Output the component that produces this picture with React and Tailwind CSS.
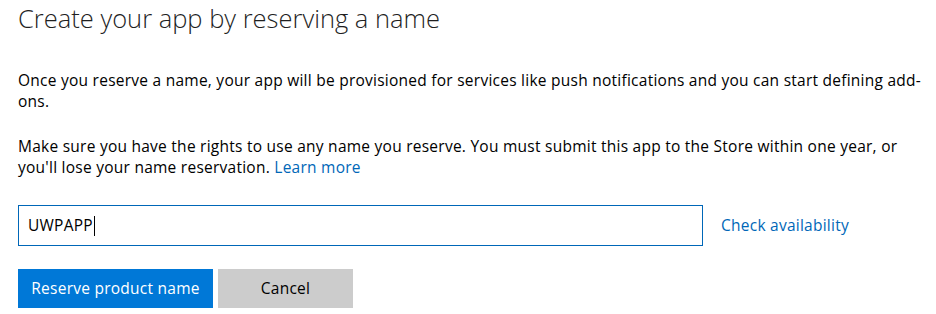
export default function App() {
  return (
    <div className="w-[936px] h-[314px] bg-white overflow-hidden text-black" style={{ fontFamily: '"Open Sans", "Noto Sans", sans-serif' }}>
      <div className="pl-[18px] pr-[14px]">
        <h1 className="pt-[1px] text-[25.5px] leading-[34px] font-light text-[#1f1f1f]">
          Create your app by reserving a name
        </h1>
        <p className="mt-[35px] text-[15.5px] leading-[21px] tracking-[0.25px]">
          Once you reserve a name, your app will be provisioned for services like push notifications and you can start defining add-ons.
        </p>
        <p className="mt-[24px] text-[15.5px] leading-[21px] tracking-[0.25px] pr-[20px]">
          Make sure you have the rights to use any name you reserve. You must submit this app to the Store within one year, or you'll lose your name reservation.{" "}
          <a href="#" className="text-[#0067b8]">Learn more</a>
        </p>
        <div className="mt-[27px] flex items-center">
          <div className="w-[685px] h-[41px] border border-[#0067b8] flex items-center pl-[9px] text-[15.5px] tracking-[0.25px]">
            UWPAPP<span className="inline-block w-px h-[20px] bg-black ml-[1px]" />
          </div>
          <a href="#" className="ml-[18px] text-[15.5px] tracking-[0.25px] text-[#0067b8]">Check availability</a>
        </div>
        <div className="mt-[23px] flex gap-[5px]">
          <button className="w-[195px] h-[39px] bg-[#0078d7] text-white text-[15.5px] tracking-[0.25px]">Reserve product name</button>
          <button className="w-[135px] h-[39px] bg-[#cccccc] text-black text-[15.5px] tracking-[0.25px]">Cancel</button>
        </div>
      </div>
    </div>
  );
}
